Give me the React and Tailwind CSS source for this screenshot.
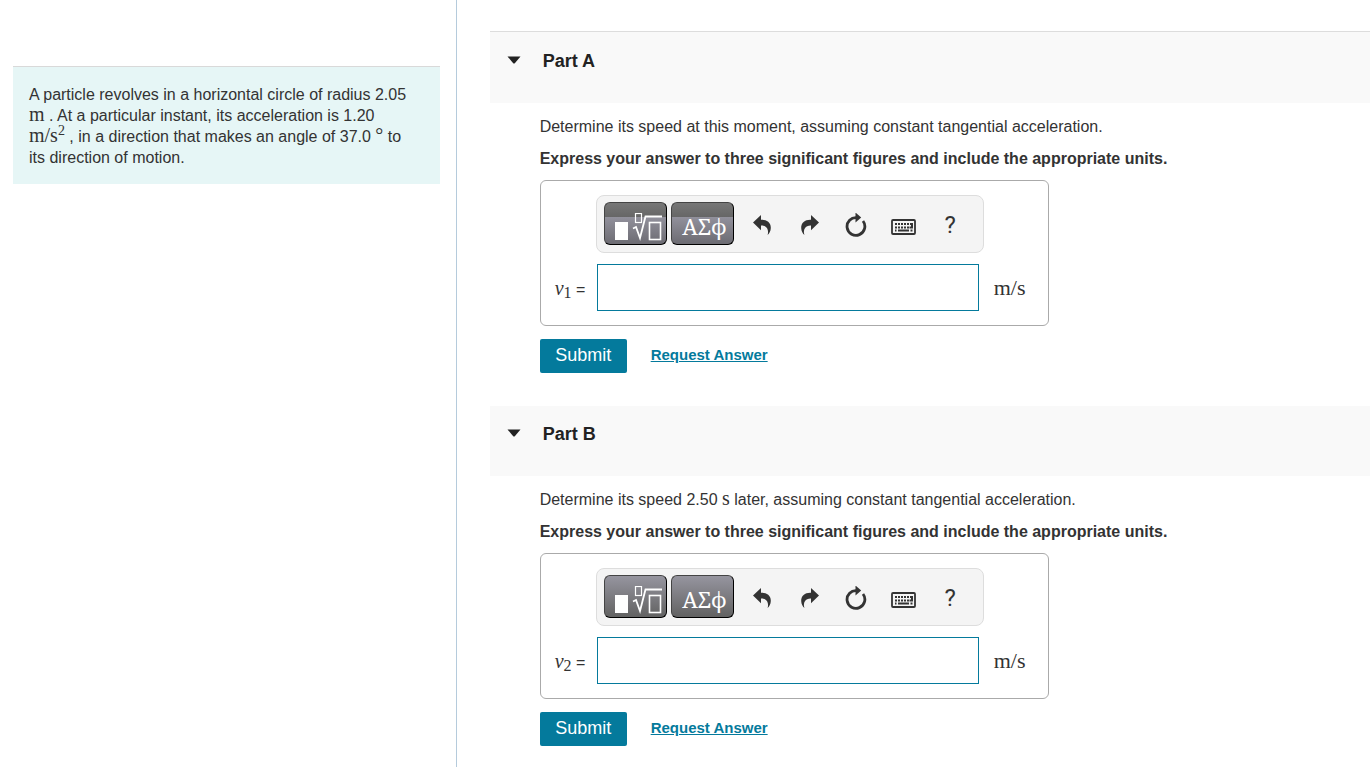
import React from "react";

const UndoIcon = () => (
  <svg width="18" height="20" viewBox="0 0 18 20" fill="#333">
    <path d="M0 7.6 L8 0 V4.8 C13.5 4.4 18 7.5 17.8 13 C17.7 16 16.4 18.6 14.6 20 C16.2 14.5 13.5 10.4 8 10.6 V15.2 Z" />
  </svg>
);

const RedoIcon = () => (
  <svg width="18" height="20" viewBox="0 0 18 20" fill="#333">
    <path d="M18 7.6 L10 0 V4.8 C4.5 4.4 0 7.5 0.2 13 C0.3 16 1.6 18.6 3.4 20 C1.8 14.5 4.5 10.4 10 10.6 V15.2 Z" />
  </svg>
);

const ResetIcon = () => (
  <svg width="22" height="24" viewBox="0 0 22 24" fill="none">
    <path
      d="M12 4.6 A8.9 8.9 0 1 0 18 8"
      stroke="#333"
      strokeWidth="2.8"
    />
    <path d="M10.5 -0.5 L16.2 4.5 L10.5 9.5 Z" fill="#333" />
  </svg>
);

const KeyboardIcon = () => (
  <svg width="25" height="16" viewBox="0 0 25 16" fill="none" stroke="#333">
    <rect x="1" y="1" width="23" height="14" rx="1" strokeWidth="1.8" />
    <path d="M4 5 H20" strokeWidth="2" strokeDasharray="2 1" />
    <path d="M4 8.5 H18" strokeWidth="2" strokeDasharray="2 1" />
    <path d="M21 4 V8.5 H18.5" strokeWidth="2" />
    <path d="M4 11.5 H5.5 M7 11.5 H18 M19.5 11.5 H21.5" strokeWidth="1.8" />
  </svg>
);

const TemplateIcon = () => (
  <svg width="48" height="28" viewBox="0 0 48 28" fill="none" stroke="#fff">
    <rect x="1" y="9" width="13" height="18" fill="#fff" stroke="none" />
    <rect x="21.5" y="0.5" width="6" height="9" strokeWidth="1.2" />
    <path d="M19 15.5 L22 14 L26 25 L31.5 3.5 H48" strokeWidth="1.8" />
    <rect x="35.5" y="9.5" width="11" height="17" strokeWidth="1.6" />
  </svg>
);

const Math = ({ children }) => (
  <span className="font-['Liberation_Serif',serif] text-[20px] leading-4">
    {children}
  </span>
);

const Toolbar = ({ glossy }) => {
  const fill = glossy
    ? "bg-[linear-gradient(#777,#666_34%,#91909b_35%,#6c6b72)]"
    : "bg-[linear-gradient(#96959f,#626262)]";
  const dark =
    "flex w-[63px] h-[43px] rounded-md border border-[#444] border-r-black border-b-black text-white";
  const plain = "flex items-center justify-center w-[47px] h-10 pt-1";

  return (
    <div className="flex items-center w-[388px] h-[58px] pl-[7px] pb-[2px] rounded-lg border border-[#ddd] bg-[#f4f4f4]">
      <button
        aria-label="Templates"
        className={`${dark} ${fill} items-end justify-end pr-1 pb-[3px]`}
      >
        <TemplateIcon />
      </button>
      <button
        className={`${dark} ${fill} ml-1 items-center justify-end pt-[5px] pr-[6px] font-['Noto_Serif','Liberation_Serif',serif] text-[22px] leading-7`}
      >
        ΑΣϕ
      </button>
      <button aria-label="Undo" className={`${plain} ml-[5px]`}>
        <UndoIcon />
      </button>
      <button aria-label="Redo" className={`${plain} pl-[2px]`}>
        <RedoIcon />
      </button>
      <button aria-label="Reset" className={plain}>
        <ResetIcon />
      </button>
      <button aria-label="Keyboard shortcuts" className={`${plain} pt-2`}>
        <KeyboardIcon />
      </button>
      <button
        aria-label="Help"
        className={`${plain} font-[Roboto,sans-serif] text-2xl`}
      >
        ?
      </button>
    </div>
  );
};

const Part = ({ name, index, glossy, headerClass, children }) => {
  const id = `answer-${index}`;
  return (
    <section>
      <div className={`flex pl-[17px] bg-[#f9f9f9] ${headerClass}`}>
        <h2 className="text-lg leading-6 font-bold text-[#222]">
          <button className="flex items-center gap-[22px]">
            <svg width="14" height="10" viewBox="0 0 14 10" fill="#222">
              <path d="M0.5 0.5 H13.5 L8 7 Q7 8 6 7 Z" />
            </svg>
            {name}
          </button>
        </h2>
      </div>
      <div className="pl-[50px] pt-[14px] pb-[33px]">
        <p className="leading-5">{children}</p>
        <p className="mt-3 font-bold leading-5">
          Express your answer to three significant figures and include the
          appropriate units.
        </p>
        <div className="mt-[11px] w-[509px] h-[146px] max-w-full rounded-md border border-[#aaa] pt-[14px]">
          <div className="pl-[55px]">
            <Toolbar glossy={glossy} />
          </div>
          <div className="mt-[11px] flex items-center">
            <label
              htmlFor={id}
              className="w-14 pl-[14px] pt-1 text-base whitespace-nowrap"
            >
              <Math>
                <i>v</i>
                <span className="relative top-[3px] text-[16px]">{index}</span>
              </Math>{" "}
              =
            </label>
            <input
              id={id}
              type="text"
              className="w-[382px] h-[47px] px-2 border border-[#047a9c] bg-white outline-none"
            />
            <span className="ml-[15px] font-['Liberation_Serif',serif] text-[22px] leading-6">
              m/s
            </span>
          </div>
        </div>
        <div className="mt-[13px] flex items-center">
          <button className="w-[87px] h-[34px] pb-[2px] rounded-xs bg-[#047a9c] text-lg leading-6 text-white">
            Submit
          </button>
          <a
            href="#"
            className="ml-6 pb-[2px] text-[15px] leading-5 font-bold text-[#047a9c] underline"
          >
            Request Answer
          </a>
        </div>
      </div>
    </section>
  );
};

const App = () => {
  return (
    <div className="flex min-h-screen bg-white font-['Liberation_Sans',Arial,sans-serif] text-base text-[#333]">
      <aside className="w-1/3 shrink-0 border-r border-[#b5cbdc] pt-[66px] pl-[13px] pr-4">
        <div className="border-t border-[#d9d9d9] bg-[#e6f6f6] px-4 pt-[17px] pb-4 leading-[21px]">
          A particle revolves in a horizontal circle of radius 2.05{" "}
          <br />
          <Math>m</Math> . At a particular instant, its acceleration is 1.20{" "}
          <br />
          <Math>
            m/s<sup className="text-[14px]">2</sup>
          </Math>{" "}
          , in a direction that makes an angle of 37.0 <Math>°</Math> to
          <br />
          its direction of motion.
        </div>
      </aside>
      <main className="flex-1 min-w-0 pt-[31px] pl-[33px]">
        <Part
          name="Part A"
          index={1}
          glossy
          headerClass="h-[72px] pt-[17px] border-t border-[#ddd]"
        >
          Determine its speed at this moment, assuming constant tangential
          acceleration.
        </Part>
        <Part name="Part B" index={2} headerClass="h-[70px] pt-4">
          Determine its speed 2.50{" "}
          <Math>s</Math> later, assuming constant tangential acceleration.
        </Part>
      </main>
    </div>
  );
};

export default App;
